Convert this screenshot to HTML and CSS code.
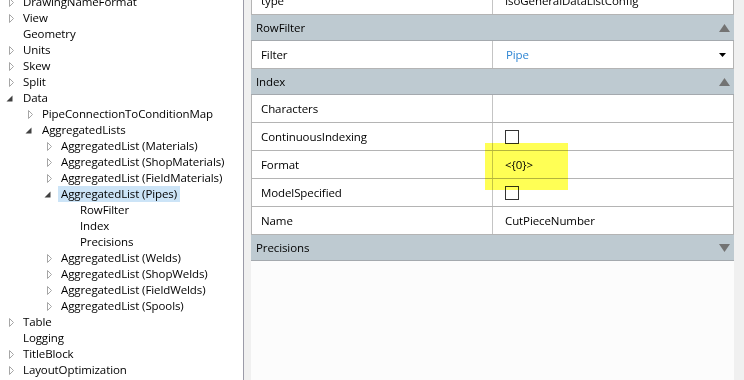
FILE: index.html
```html
<!DOCTYPE html>
<html lang="en">
<head>
    <meta charset="UTF-8">
    <title>Config Editor</title>
    <link rel="stylesheet" href="styles.css">
</head>
<body>
    <svg class="defs" width="0" height="0">
        <symbol id="tri-closed" viewBox="0 0 16 16">
            <path d="M5.5 4.5 L9.5 8.5 L5.5 12.5 Z" fill="#fff" stroke="#a6a6a6" stroke-width="1"/>
        </symbol>
        <symbol id="tri-open" viewBox="0 0 16 16">
            <path d="M8.5 5.5 L8.5 11.5 L2.5 11.5 Z" fill="#404040"/>
        </symbol>
    </svg>

    <!-- ===== Tree ===== -->
    <div class="tree">
        <div class="tree-list">
            <div class="node lvl1"><svg class="exp"><use href="#tri-closed"/></svg><span class="label">DrawingNameFormat</span></div>
            <div class="node lvl1"><svg class="exp"><use href="#tri-closed"/></svg><span class="label">View</span></div>
            <div class="node lvl1"><span class="exp"></span><span class="label">Geometry</span></div>
            <div class="node lvl1"><svg class="exp"><use href="#tri-closed"/></svg><span class="label">Units</span></div>
            <div class="node lvl1"><svg class="exp"><use href="#tri-closed"/></svg><span class="label">Skew</span></div>
            <div class="node lvl1"><svg class="exp"><use href="#tri-closed"/></svg><span class="label">Split</span></div>
            <div class="node lvl1"><svg class="exp"><use href="#tri-open"/></svg><span class="label">Data</span></div>
            <div class="node lvl2"><svg class="exp"><use href="#tri-closed"/></svg><span class="label">PipeConnectionToConditionMap</span></div>
            <div class="node lvl2"><svg class="exp"><use href="#tri-open"/></svg><span class="label">AggregatedLists</span></div>
            <div class="node lvl3"><svg class="exp"><use href="#tri-closed"/></svg><span class="label">AggregatedList (Materials)</span></div>
            <div class="node lvl3"><svg class="exp"><use href="#tri-closed"/></svg><span class="label">AggregatedList (ShopMaterials)</span></div>
            <div class="node lvl3"><svg class="exp"><use href="#tri-closed"/></svg><span class="label">AggregatedList (FieldMaterials)</span></div>
            <div class="node lvl3 selected"><svg class="exp"><use href="#tri-open"/></svg><span class="label">AggregatedList (Pipes)</span></div>
            <div class="node lvl4"><span class="exp"></span><span class="label">RowFilter</span></div>
            <div class="node lvl4"><span class="exp"></span><span class="label">Index</span></div>
            <div class="node lvl4"><span class="exp"></span><span class="label">Precisions</span></div>
            <div class="node lvl3"><svg class="exp"><use href="#tri-closed"/></svg><span class="label">AggregatedList (Welds)</span></div>
            <div class="node lvl3"><svg class="exp"><use href="#tri-closed"/></svg><span class="label">AggregatedList (ShopWelds)</span></div>
            <div class="node lvl3"><svg class="exp"><use href="#tri-closed"/></svg><span class="label">AggregatedList (FieldWelds)</span></div>
            <div class="node lvl3"><svg class="exp"><use href="#tri-closed"/></svg><span class="label">AggregatedList (Spools)</span></div>
            <div class="node lvl1"><svg class="exp"><use href="#tri-closed"/></svg><span class="label">Table</span></div>
            <div class="node lvl1"><span class="exp"></span><span class="label">Logging</span></div>
            <div class="node lvl1"><svg class="exp"><use href="#tri-closed"/></svg><span class="label">TitleBlock</span></div>
            <div class="node lvl1"><svg class="exp"><use href="#tri-closed"/></svg><span class="label">LayoutOptimization</span></div>
        </div>
    </div>

    <!-- ===== Property Grid ===== -->
    <div class="grid-wrap">
        <div class="grid">
            <div class="row">
                <div class="name">type</div>
                <div class="value">IsoGeneralDataListConfig</div>
            </div>

            <div class="cat">
                <span>RowFilter</span>
                <svg class="cat-arrow" viewBox="0 0 11 8"><polygon points="0,8 5.5,0 11,8"/></svg>
            </div>
            <div class="row">
                <div class="name">Filter</div>
                <div class="value combo">
                    <span class="link">Pipe</span>
                    <svg class="drop" viewBox="0 0 7 4"><polygon points="0,0 7,0 3.5,4"/></svg>
                </div>
            </div>

            <div class="cat">
                <span>Index</span>
                <svg class="cat-arrow" viewBox="0 0 11 8"><polygon points="0,8 5.5,0 11,8"/></svg>
            </div>
            <div class="row">
                <div class="name">Characters</div>
                <div class="value"></div>
            </div>
            <div class="row">
                <div class="name">ContinuousIndexing</div>
                <div class="value"><span class="check"></span></div>
            </div>
            <div class="row">
                <div class="name">Format</div>
                <div class="value">&lt;{0}&gt;</div>
            </div>
            <div class="row">
                <div class="name">ModelSpecified</div>
                <div class="value"><span class="check"></span></div>
            </div>
            <div class="row">
                <div class="name">Name</div>
                <div class="value">CutPieceNumber</div>
            </div>

            <div class="cat">
                <span>Precisions</span>
                <svg class="cat-arrow" viewBox="0 0 11 8"><polygon points="0,0 11,0 5.5,8"/></svg>
            </div>
        </div>

        <!-- highlighter mark over the Format value -->
        <div class="marker"></div>
    </div>
</body>
</html>
```

FILE: styles.css
```css
/* ===== Page ===== */
body {
    margin: 0;
    width: 744px;
    height: 380px;
    overflow: hidden;
    display: flex;
    background: #f0f0f0;
    font-family: "Open Sans", "Noto Sans", sans-serif;
    font-size: 11.5px;
    letter-spacing: -0.1px;
    color: #000;
}

.defs {
    position: absolute;
}

/* ===== Tree ===== */
.tree {
    flex: none;
    width: 243px;
    background: #fff;
    border-right: 1px solid #9b9ba8;
    overflow: hidden;
}

.tree-list {
    margin-top: -6px;
}

.node {
    display: flex;
    align-items: center;
    height: 16px;
}

.node .exp {
    flex: none;
    width: 16px;
    height: 16px;
}

.lvl1 { padding-left: 4px; }
.lvl2 { padding-left: 23px; }
.lvl3 { padding-left: 42px; }
.lvl4 { padding-left: 61px; }

.label {
    padding: 0 3px;
    line-height: 16px;
    white-space: nowrap;
}

.node.selected .label {
    background: #cce4f7;
}

/* ===== Property Grid ===== */
.grid-wrap {
    flex: 1;
    position: relative;
    padding: 0 10px 0 7px;
    overflow: hidden;
}

.grid {
    margin-top: -13px;
    height: 420px;
    background: #fcfcfc;
}

.row {
    display: flex;
    height: 27px;
    background: #fff;
    border-left: 1px solid #b4b4b4;
    border-right: 1px solid #b4b4b4;
    border-bottom: 1px solid #b4b4b4;
}

.name {
    flex: none;
    box-sizing: border-box;
    width: 241px;
    padding-left: 9px;
    border-right: 1px solid #c4c4c4;
    display: flex;
    align-items: center;
}

.value {
    flex: 1;
    padding-left: 12px;
    display: flex;
    align-items: center;
}

.value.combo {
    justify-content: space-between;
    padding-left: 13px;
    padding-right: 7px;
}

.link {
    color: #2f86d4;
}

.drop {
    width: 7px;
    height: 4px;
    fill: #000;
}

.check {
    box-sizing: border-box;
    width: 14px;
    height: 14px;
    border: 1px solid #333;
    background: #fff;
}

/* ===== Category Headers ===== */
.cat {
    display: flex;
    align-items: center;
    justify-content: space-between;
    height: 25px;
    padding: 0 4px 0 5px;
    background: #becad1;
    border-bottom: 1px solid #a4a9ae;
}

.cat-arrow {
    width: 11px;
    height: 8px;
    fill: #737373;
}

/* ===== Highlighter ===== */
.marker {
    position: absolute;
    left: 241px;
    top: 143px;
    width: 83px;
    height: 47px;
    background: #ffff55;
    mix-blend-mode: multiply;
}
```
